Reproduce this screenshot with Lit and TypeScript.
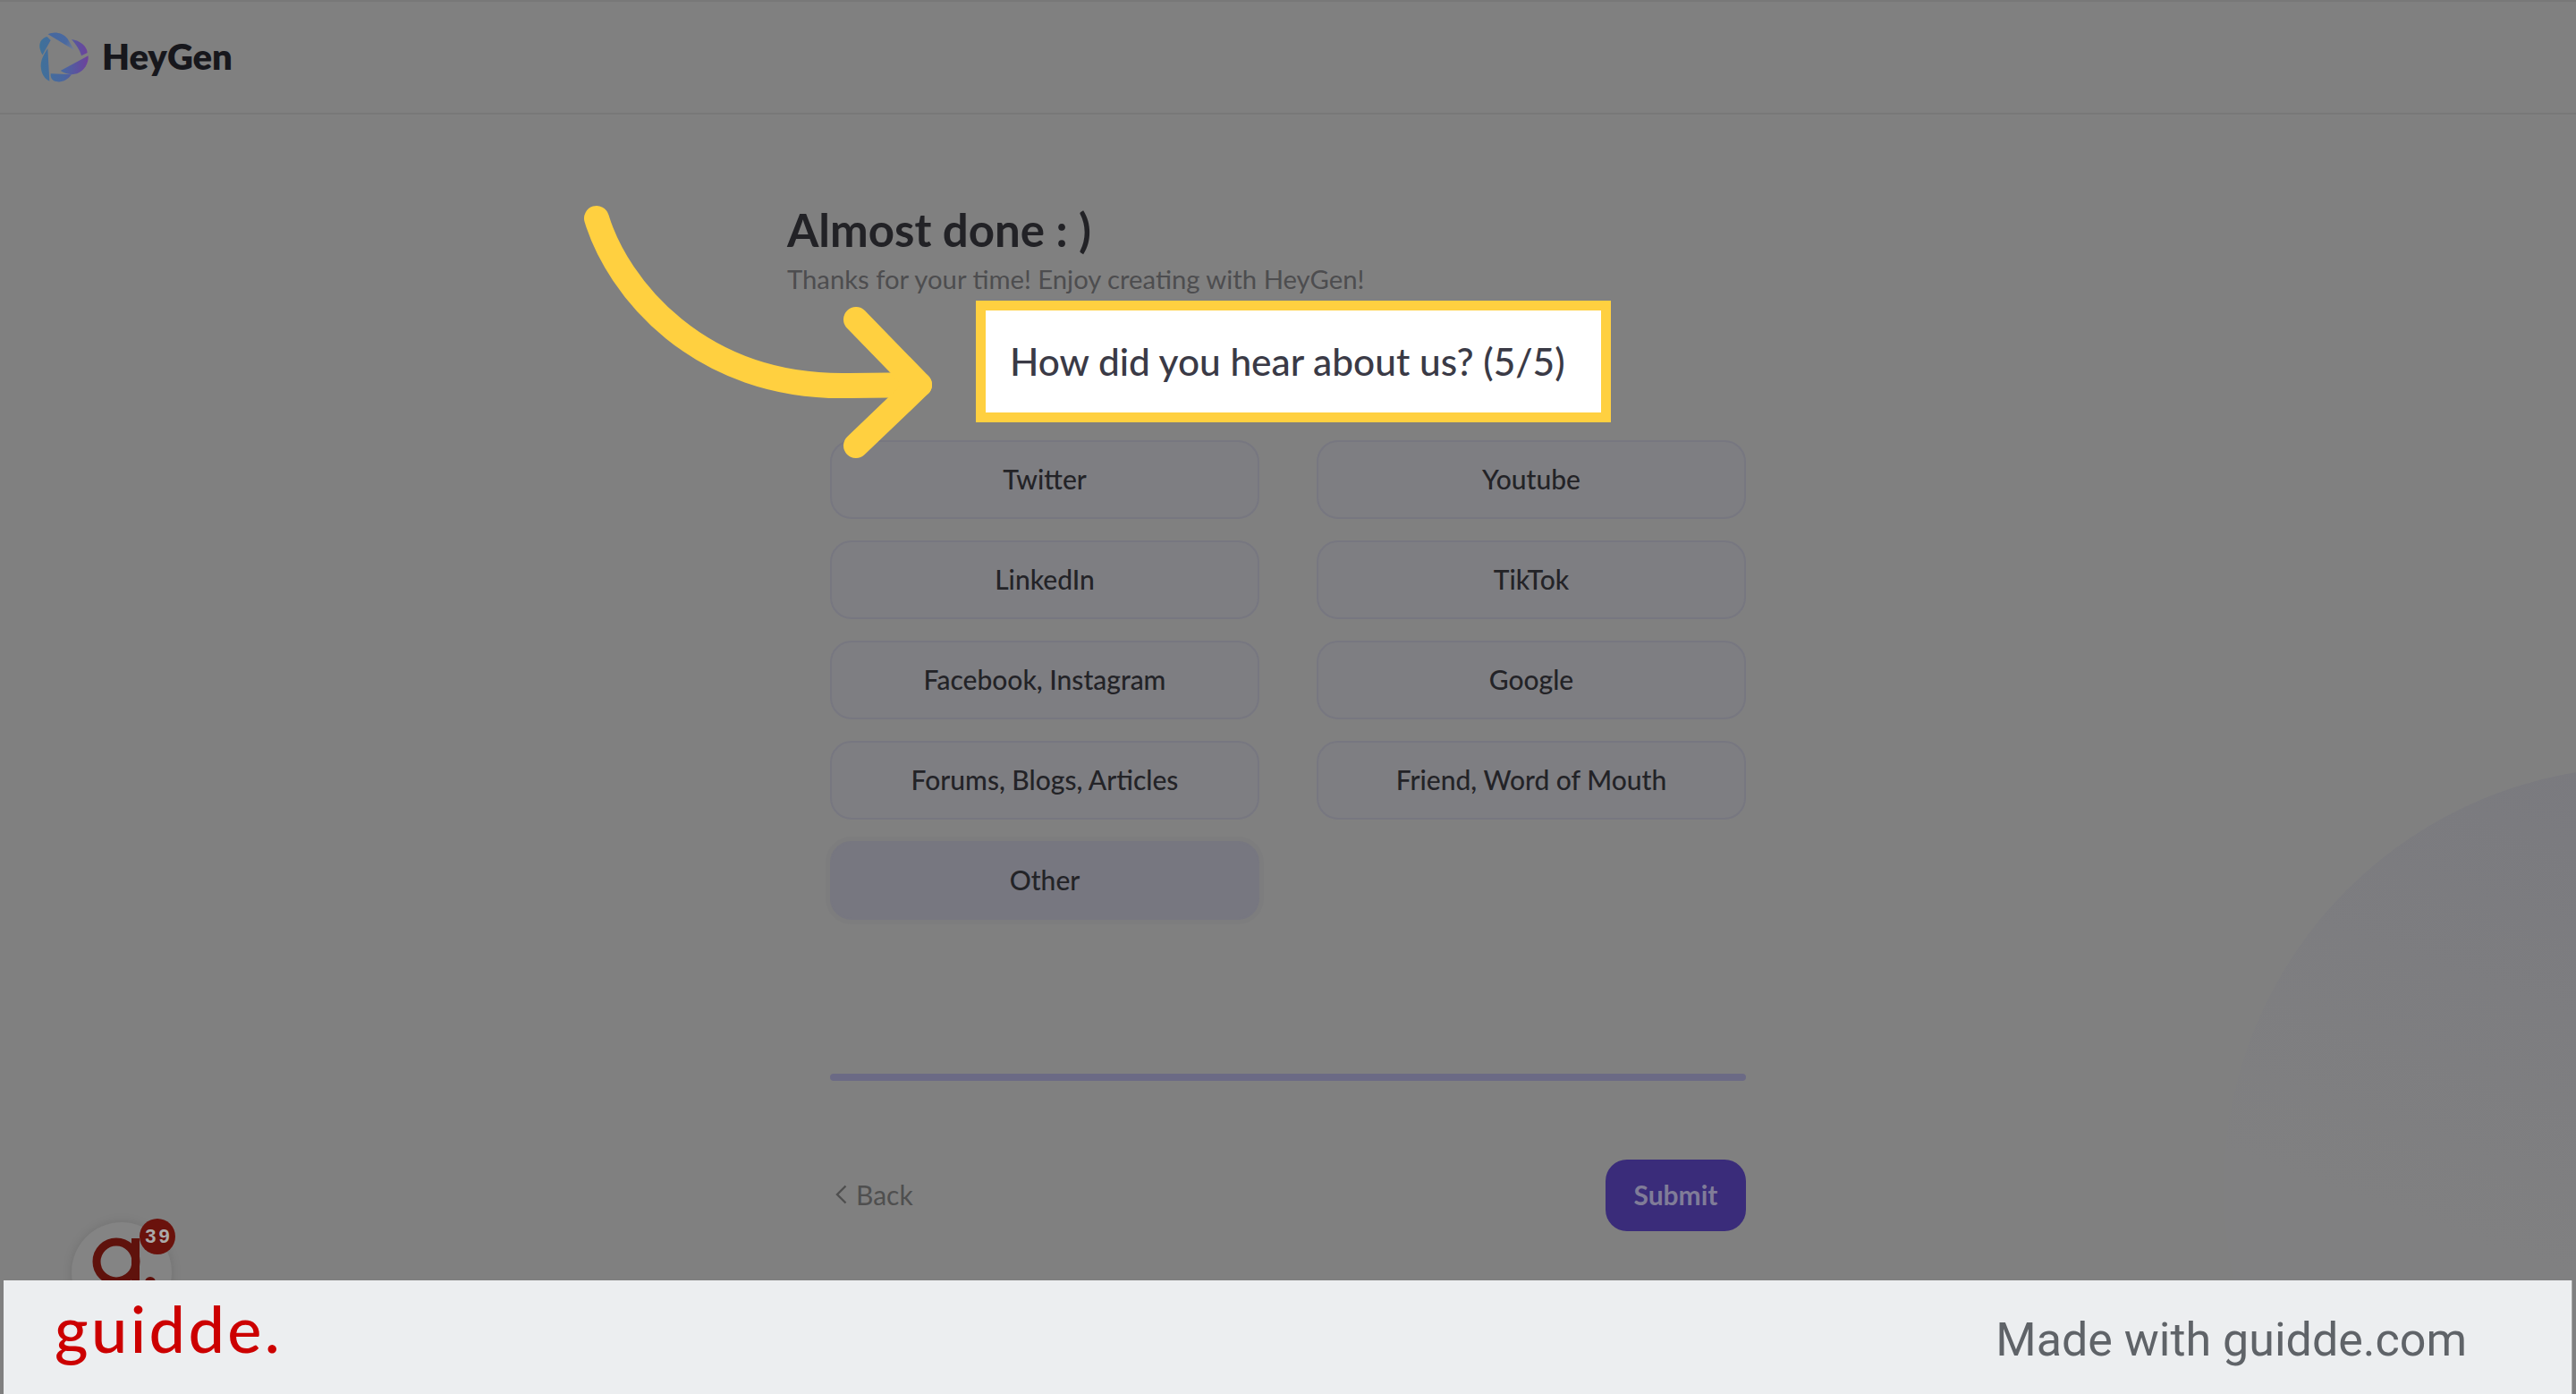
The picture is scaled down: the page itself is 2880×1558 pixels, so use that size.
import { LitElement, html, css, svg } from 'lit';
import { customElement } from 'lit/decorators.js';

const OPTIONS = [
  'Twitter', 'Youtube',
  'LinkedIn', 'TikTok',
  'Facebook, Instagram', 'Google',
  'Forums, Blogs, Articles', 'Friend, Word of Mouth',
  'Other',
];

// petals of the HeyGen mark, traced on a 210 unit box
const logo = svg`
  <defs>
    <linearGradient id="lg" gradientUnits="userSpaceOnUse" x1="25" y1="100" x2="190" y2="100">
      <stop offset="0" stop-color="#3f7199"></stop>
      <stop offset="0.5" stop-color="#4a66a0"></stop>
      <stop offset="0.8" stop-color="#5e4f9e"></stop>
      <stop offset="1" stop-color="#70409b"></stop>
    </linearGradient>
    <linearGradient id="tip" gradientUnits="userSpaceOnUse" x1="60" y1="30" x2="142" y2="82">
      <stop offset="0" stop-color="#46689f"></stop>
      <stop offset="0.6" stop-color="#4a69a0"></stop>
      <stop offset="1" stop-color="#7a8094"></stop>
    </linearGradient>
  </defs>
  <path fill="url(#tip)" d="M53 28 C70 18 100 20 118 42 L142 82 Z"></path>
  <path fill="url(#lg)" d="M50 36 C30 40 20 60 27 80 C30 90 33 95 35 97 L62 48 Z"></path>
  <path fill="url(#lg)" d="M52 75 C40 95 25 115 30 145 C33 165 45 180 58 185 Z"></path>
  <path fill="url(#lg)" d="M62 160 L132 163 C120 180 100 190 85 187 C72 187 60 178 62 160 Z"></path>
  <path fill="url(#lg)" d="M95 150 L188 100 C190 125 175 150 150 160 C130 166 110 160 95 150 Z"></path>
  <path fill="url(#lg)" d="M132 45 C160 48 185 70 185 90 L165 100 C160 80 145 60 132 45 Z"></path>
`;

@customElement('app-root')
export class AppRoot extends LitElement {
  static styles = css`
    :host {
      display: block;
    }

    .page {
      position: relative;
      height: 1558px;
      overflow: hidden;
      display: flex;
      flex-direction: column;
      background: #808080;
      font-family: 'Lato', sans-serif;
      color: #232327;
    }

    .blob {
      position: absolute;
      left: 2486px;
      top: 857px;
      width: 940px;
      height: 940px;
      border-radius: 50%;
      background: linear-gradient(200deg, #78787e 0%, #808081 60%);
    }

    .topbar {
      flex: none;
      height: 128px;
      box-sizing: border-box;
      padding-left: 36px;
      display: flex;
      align-items: center;
      gap: 8px;
      border-top: 2px solid #787878;
      border-bottom: 2px solid #787878;
    }

    .logo {
      width: 70px;
      height: 70px;
    }

    .brand {
      padding-bottom: 2px;
      font-size: 40px;
      font-weight: 800;
      color: #17171c;
    }

    .main {
      position: relative;
      flex: 1;
      width: 1072px;
      margin-left: 880px;
      display: flex;
      flex-direction: column;
    }

    h1 {
      margin: 103px 0 0;
      font-size: 51px;
      line-height: 52px;
      font-weight: 700;
      color: #222226;
    }

    .sub {
      margin-top: 10px;
      font-size: 29.25px;
      line-height: 38px;
      color: #4d4d4f;
    }

    .options {
      margin: 161px 0 0 48px;
      display: grid;
      grid-template-columns: 480px 480px;
      grid-auto-rows: 88px;
      column-gap: 64px;
      row-gap: 24px;
    }

    .option {
      box-sizing: border-box;
      padding-bottom: 2px;
      display: flex;
      align-items: center;
      justify-content: center;
      border: 2px solid #777780;
      border-radius: 24px;
      background: #7e7e82;
      font-size: 30px;
      font-weight: 500;
      color: #232327;
    }

    .option.selected {
      background: #777780;
      border-color: #777780;
      box-shadow: 0 0 0 5px #7d7d7e;
    }

    .progress {
      margin: 172px 0 0 48px;
      height: 8px;
      border-radius: 4px;
      background: #6b6a85;
    }

    .actions {
      margin: 88px 0 0 48px;
      display: flex;
      align-items: center;
      justify-content: space-between;
    }

    .back {
      display: flex;
      align-items: center;
      gap: 10px;
      padding: 0 0 2px 6px;
      font-size: 30px;
      color: #4f4f4f;
    }

    .back svg {
      width: 13px;
      height: 22px;
    }

    .submit {
      box-sizing: border-box;
      width: 157px;
      height: 80px;
      padding-bottom: 2px;
      display: flex;
      align-items: center;
      justify-content: center;
      border-radius: 24px;
      background: #3a2c7a;
      color: #807c98;
      font-size: 30px;
      font-weight: 700;
    }

    .footer {
      position: relative;
      flex: none;
      height: 127px;
      box-sizing: border-box;
      margin: 0 4px 0 4px;
      display: flex;
      align-items: center;
      justify-content: space-between;
      padding: 0 117px 0 57px;
      background: #eceef0;
      border-right: 1px solid #a6a6a6;
    }

    .wordmark {
      margin-top: -22px;
      font-family: 'Lato', sans-serif;
      font-size: 72px;
      font-weight: 500;
      letter-spacing: 3.4px;
      line-height: 1;
      color: #cc0000;
    }

    .made {
      margin-top: 6px;
      font-family: 'Roboto', sans-serif;
      font-size: 52px;
      color: #5f6368;
    }

    .avatar {
      position: absolute;
      left: 80px;
      top: 1366px;
      width: 112px;
      height: 112px;
      border-radius: 50%;
      background: #848484;
      box-shadow: 0 0 12px rgba(0, 0, 0, 0.12);
    }

    .avatar svg {
      display: block;
      width: 112px;
      height: 112px;
    }

    .badge {
      position: absolute;
      left: 156px;
      top: 1362px;
      width: 40px;
      height: 40px;
      border-radius: 50%;
      background: #6a120c;
      display: flex;
      align-items: center;
      justify-content: center;
      font-family: 'Liberation Sans', sans-serif;
      font-size: 22px;
      font-weight: 700;
      letter-spacing: 3px;
      text-indent: 3px;
      color: #aaaaaa;
    }

    .arrow {
      position: absolute;
      left: 0;
      top: 0;
      width: 2880px;
      height: 1558px;
      pointer-events: none;
    }

    .callout {
      position: absolute;
      left: 1091px;
      top: 336px;
      width: 710px;
      height: 136px;
      box-sizing: border-box;
      border: 11px solid #ffd040;
      background: #ffffff;
      display: flex;
      align-items: center;
      padding: 0 0 2px 27px;
      font-size: 42.4px;
      font-weight: 500;
      color: #3a3a46;
      white-space: nowrap;
    }
  `;

  render() {
    return html`
      <div class="page">
        <div class="blob"></div>
        <header class="topbar">
          <svg class="logo" viewBox="0 0 210 210">${logo}</svg>
          <span class="brand">HeyGen</span>
        </header>
        <main class="main">
          <h1>Almost done : )</h1>
          <div class="sub">Thanks for your time! Enjoy creating with HeyGen!</div>
          <div class="options">
            ${OPTIONS.map(
              (o) => html`<div class="option ${o === 'Other' ? 'selected' : ''}">${o}</div>`
            )}
          </div>
          <div class="progress"></div>
          <div class="actions">
            <div class="back">
              <svg viewBox="0 0 13 22" fill="none" stroke="#4f4f4f" stroke-width="2.4">
                <path d="M11.5 1.5 L2 11 L11.5 20.5"></path>
              </svg>
              Back
            </div>
            <div class="submit">Submit</div>
          </div>
        </main>
        <div class="avatar">
          <svg viewBox="0 0 112 112" fill="none" stroke="#5f120c" stroke-width="9">
            <circle cx="50" cy="44" r="22"></circle>
            <path d="M71.5 18 V72"></path>
            <circle cx="88" cy="67" r="6" fill="#5f120c" stroke="none"></circle>
          </svg>
        </div>
        <div class="badge">39</div>
        <footer class="footer">
          <span class="wordmark">guidde.</span>
          <span class="made">Made with guidde.com</span>
        </footer>
        <svg class="arrow" viewBox="0 0 2880 1558" fill="none" stroke="#ffd040" stroke-width="28" stroke-linecap="round" stroke-linejoin="round">
          <path d="M667 244 C690 320 780 435 950 431 L1028 430"></path>
          <path d="M957 357 L1028 430 L957 498"></path>
        </svg>
        <div class="callout">How did you hear about us? (5/5)</div>
      </div>
    `;
  }
}
